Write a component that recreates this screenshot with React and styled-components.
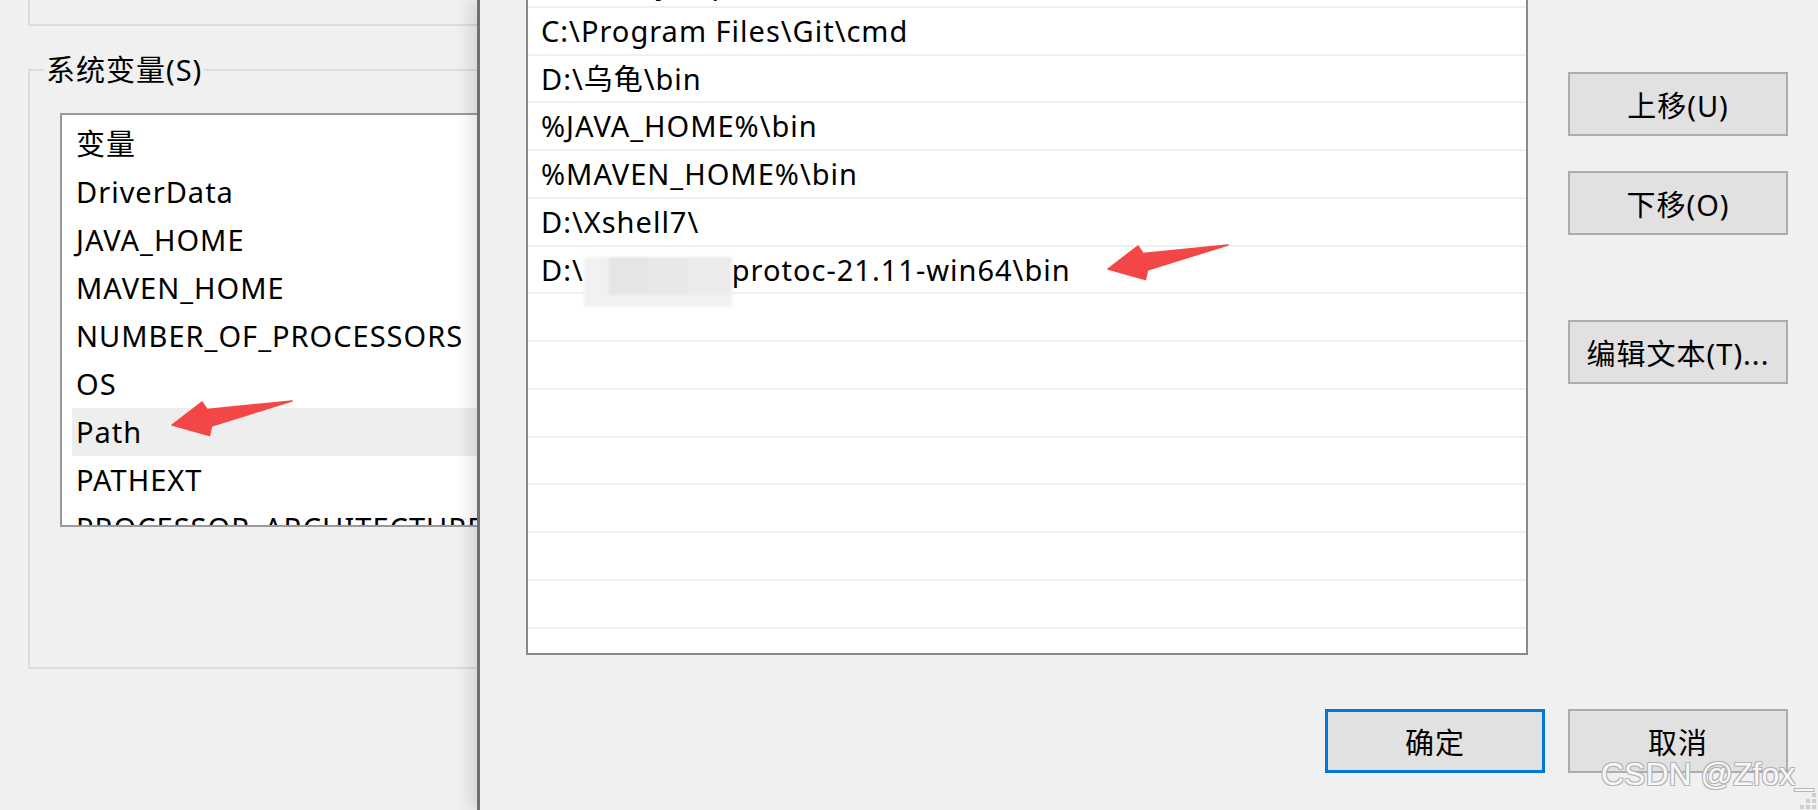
import React from 'react';
import styled, { createGlobalStyle } from 'styled-components';

// 环境变量窗口 + 编辑环境变量对话框（截图的局部）

const GlobalStyle = createGlobalStyle`
  html, body {
    margin: 0;
    padding: 0;
  }
  body {
    width: 1818px;
    height: 810px;
    overflow: hidden;
    background: #f0f0f0;
  }
`;

const Screen = styled.div`
  position: relative;
  display: flex;
  width: 1818px;
  height: 810px;
  overflow: hidden;
  background: #f0f0f0;
  color: #000;
  font-family: "Noto Sans", "Noto Sans CJK SC", sans-serif;
  font-size: 29px;
  letter-spacing: 1px;
`;

/* ---------- 左侧：环境变量窗口 ---------- */

const EnvWindow = styled.div`
  flex: none;
  width: 477px;
  overflow: hidden;
  padding-left: 28px;
  box-sizing: border-box;
`;

const PrevGroup = styled.div`
  width: 520px;
  height: 24px;
  border-left: 2px solid #dcdcdc;
  border-bottom: 2px solid #dcdcdc;
`;

const GroupBox = styled.fieldset`
  width: 520px;
  height: 614px;
  margin: 29px 0 0;
  padding: 28px 0 0 30px;
  box-sizing: border-box;
  border: 2px solid #dcdcdc;
`;

const Legend = styled.legend`
  margin-left: -16px;
  padding: 0 2px;
  line-height: 30px;
  font-size: 29px;
`;

const VarList = styled.div`
  width: 480px;
  height: 414px;
  box-sizing: border-box;
  padding: 5px 0 0 10px;
  overflow: hidden;
  background: #fff;
  border: 2px solid #9a9a9a;
  border-right: none;
`;

const VarItem = styled.div`
  height: 48px;
  line-height: 48px;
  padding-left: 4px;
  white-space: nowrap;
  background: ${({ $selected }) => ($selected ? '#eeeeee' : 'transparent')};
`;

/* ---------- 右侧：编辑环境变量对话框 ---------- */

const EditDialog = styled.div`
  position: relative;
  z-index: 1;
  flex: 1;
  display: flex;
  flex-direction: column;
  padding: 0 30px 0 46px;
  border-left: 3px solid #707070;
  box-shadow: -8px 0 14px rgba(0, 0, 0, 0.1);
  background: #f0f0f0;
`;

const MainRow = styled.div`
  display: flex;
  gap: 40px;
  margin-top: -44px;
`;

const PathList = styled.div`
  width: 1002px;
  height: 699px;
  box-sizing: border-box;
  overflow: hidden;
  background: #fff;
  border: 2px solid #8a8a8a;
`;

const PathRow = styled.div`
  position: relative;
  height: 47.75px;
  box-sizing: border-box;
  padding-left: 13px;
  line-height: 46px;
  white-space: nowrap;
  border-top: 2px solid #f0f0f0;
`;

const Redact = styled.span`
  position: relative;
  display: inline-block;
  width: 148px;
  height: 46px;
  vertical-align: top;

  &::before {
    content: '';
    position: absolute;
    z-index: 2;
    left: 0;
    right: 0;
    top: 10px;
    height: 50px;
    background:
      linear-gradient(to right, #f1f1f1 0 17%, #e5e5e5 17% 44%, #e8e8e8 44% 70%, #ececec 70% 100%) top / 100% 76% no-repeat,
      #f2f2f2;
    filter: blur(1.5px);
  }
`;

const SideButtons = styled.div`
  display: flex;
  flex-direction: column;
  padding-top: 116px;
`;

const Button = styled.button`
  width: 220px;
  height: 64px;
  margin-top: ${({ $gap }) => $gap || 0}px;
  padding: 0;
  box-sizing: border-box;
  background: #e1e1e1;
  border: ${({ $default }) => ($default ? '3px solid #0078d7' : '2px solid #adadad')};
  color: #000;
  font-family: inherit;
  font-size: 29px;
  letter-spacing: 1px;
`;

const FooterRow = styled.div`
  display: flex;
  justify-content: flex-end;
  gap: 23px;
  margin-top: 54px;
`;

/* ---------- 覆盖层：箭头、水印 ---------- */

const ArrowSvg = styled.svg`
  position: absolute;
  z-index: 5;
  left: ${({ $x }) => $x}px;
  top: ${({ $y }) => $y}px;
`;

const Watermark = styled.div`
  position: absolute;
  z-index: 6;
  left: 1601px;
  top: 756px;
  font-family: "Liberation Sans", Arial, sans-serif;
  font-size: 32px;
  letter-spacing: 0;
  color: rgba(255, 255, 255, 0.92);
  text-shadow: -1px -1px 0 #b4b4b4, 1px -1px 0 #b4b4b4, -1px 1px 0 #b4b4b4, 1px 1px 0 #b4b4b4;
  white-space: nowrap;
`;

const Grip = styled.svg`
  position: absolute;
  z-index: 5;
  right: 0;
  bottom: 0;
`;

const RedArrow = ({ x, y }) => (
  <ArrowSvg $x={x - 2} $y={y - 26} width="128" height="40" viewBox="0 0 128 40">
    <polygon
      points="2,26 32,3 37,10.5 122,2 41.5,27 39.5,36.5"
      fill="#f34747"
      stroke="#f34747"
      strokeWidth="1.5"
      strokeLinejoin="round"
    />
  </ArrowSvg>
);

const variables = [
  '变量',
  'DriverData',
  'JAVA_HOME',
  'MAVEN_HOME',
  'NUMBER_OF_PROCESSORS',
  'OS',
  'Path',
  'PATHEXT',
  'PROCESSOR_ARCHITECTURE',
];

const paths = [
  'D:\\nodejs\\npm',
  'C:\\Program Files\\Git\\cmd',
  'D:\\乌龟\\bin',
  '%JAVA_HOME%\\bin',
  '%MAVEN_HOME%\\bin',
  'D:\\Xshell7\\',
];

export default function App() {
  return (
    <>
      <GlobalStyle />
      <Screen>
        <EnvWindow>
          <PrevGroup />
          <GroupBox>
            <Legend>系统变量(S)</Legend>
            <VarList>
              {variables.map((v) => (
                <VarItem key={v} $selected={v === 'Path'}>
                  {v}
                </VarItem>
              ))}
            </VarList>
          </GroupBox>
        </EnvWindow>

        <EditDialog>
          <MainRow>
            <PathList>
              {paths.map((p) => (
                <PathRow key={p}>{p}</PathRow>
              ))}
              <PathRow>
                D:\<Redact />protoc-21.11-win64\bin
              </PathRow>
              {Array.from({ length: 8 }, (_, i) => (
                <PathRow key={`empty-${i}`} />
              ))}
            </PathList>
            <SideButtons>
              <Button>上移(U)</Button>
              <Button $gap={35}>下移(O)</Button>
              <Button $gap={85}>编辑文本(T)...</Button>
            </SideButtons>
          </MainRow>
          <FooterRow>
            <Button $default>确定</Button>
            <Button>取消</Button>
          </FooterRow>
        </EditDialog>

        <RedArrow x={172} y={425} />
        <RedArrow x={1108} y={269} />

        <Watermark>CSDN @Zfox_</Watermark>
        <Grip width="22" height="18" viewBox="0 0 22 18">
          <g fill="#cfcfcf">
            <rect x="16" y="1" width="4" height="4" />
            <rect x="10" y="7" width="4" height="4" />
            <rect x="16" y="7" width="4" height="4" />
            <rect x="4" y="13" width="4" height="4" />
            <rect x="10" y="13" width="4" height="4" />
            <rect x="16" y="13" width="4" height="4" />
          </g>
        </Grip>
      </Screen>
    </>
  );
}
